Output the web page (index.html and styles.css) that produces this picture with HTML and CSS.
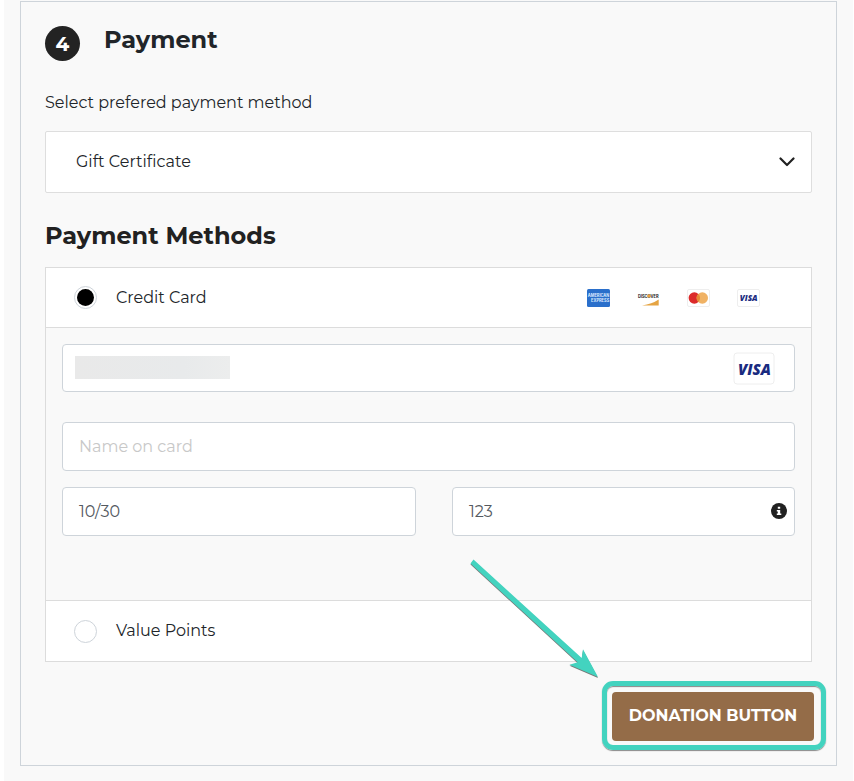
FILE: index.html
```html
<!DOCTYPE html>
<html lang="en">

<head>
    <meta charset="UTF-8">
    <meta name="viewport" content="width=device-width, initial-scale=1.0">
    <title>Payment</title>
    <link rel="stylesheet" href="styles.css">
</head>

<body>
    <main class="page">
        <section class="panel">
            <header class="step-header">
                <span class="step-number">4</span>
                <h2 class="step-title">Payment</h2>
            </header>

            <p class="select-label">Select prefered payment method</p>
            <div class="select-box">
                <span>Gift Certificate</span>
                <svg class="chevron" viewBox="0 0 16 10">
                    <path d="M1.500 1.500L8 8l6.500-6.500" />
                </svg>
            </div>

            <h2 class="methods-title">Payment Methods</h2>
            <div class="methods">
                <!-- Credit card -->
                <div class="method-row">
                    <span class="radio checked"></span>
                    <span>Credit Card</span>
                    <div class="card-icons">
                        <svg class="card-icon" viewBox="0 0 24 18">
                            <rect width="23" height="18" rx="1.500" fill="#2a6fcb" />
                            <text class="amex" x="0.800" y="7.800" textLength="21.500" lengthAdjust="spacingAndGlyphs">AMERICAN</text>
                            <text class="amex" x="4" y="12.800" textLength="18.300" lengthAdjust="spacingAndGlyphs">EXPRESS</text>
                        </svg>
                        <svg class="card-icon" viewBox="0 0 24 18">
                            <text class="discover" x="1" y="8.600" textLength="20.500" lengthAdjust="spacingAndGlyphs">DISCOVER</text>
                            <circle cx="12.200" cy="6.900" r="1.700" fill="#eaa23f" />
                            <path d="M5 16.500Q15 15 21.700 10.500V16.500z" fill="#e5a443" />
                        </svg>
                        <svg class="card-icon" viewBox="0 0 24 18">
                            <rect class="card-edge" x="0.500" y="0.500" width="22" height="17" rx="1.500" />
                            <circle cx="7.300" cy="9" r="5.700" fill="#dc2b2b" />
                            <circle cx="15.300" cy="9" r="5.700" fill="#f0b264" />
                            <path d="M11.300 4.900a5.700 5.700 0 010 8.200a5.700 5.700 0 010-8.200z" fill="#e58a35" />
                        </svg>
                        <svg class="card-icon" viewBox="0 0 24 18">
                            <rect class="card-edge" x="0.500" y="0.500" width="22" height="17" rx="1.500" />
                            <text class="visa" x="2.800" y="12" font-size="8.500" textLength="17.800" lengthAdjust="spacingAndGlyphs">VISA</text>
                        </svg>
                    </div>
                </div>

                <div class="card-form">
                    <div class="field number-field">
                        <span class="masked"></span>
                        <svg class="visa-badge" viewBox="0 0 42 34">
                            <rect class="card-edge" x="1" y="1" width="40" height="31" rx="3" />
                            <text class="visa" x="5" y="22.500" font-size="15.500" textLength="33" lengthAdjust="spacingAndGlyphs">VISA</text>
                        </svg>
                    </div>
                    <div class="field name-field">
                        <span class="placeholder">Name on card</span>
                    </div>
                    <div class="field-row">
                        <div class="field"><span>10/30</span></div>
                        <div class="field">
                            <span>123</span>
                            <svg class="info-icon" viewBox="0 0 16 16">
                                <circle cx="8" cy="8" r="8" fill="#212121" />
                                <path d="M6.800 3.800h2.400v2H6.800zM5.800 7h3.400v3.600h1.100v1.500H5.800v-1.500h1V8.500h-1z" fill="#fff" />
                            </svg>
                        </div>
                    </div>
                </div>

                <!-- Value points -->
                <div class="method-row">
                    <span class="radio"></span>
                    <span>Value Points</span>
                </div>
            </div>

            <div class="actions">
                <div class="highlight">
                    <button class="donate-btn">DONATION BUTTON</button>
                    <svg class="arrow" viewBox="0 0 130 122">
                        <path d="M3.500 1.500L111.700 99.900 113 91.300 128 119 99.500 106.800 107.700 104.200.500 5.500z" />
                    </svg>
                </div>
            </div>
        </section>
    </main>
</body>

</html>
```
FILE: styles.css
```css
* {
    box-sizing: border-box;
}

body {
    margin: 0;
    background: #fff;
    color: #212529;
    font-family: 'Montserrat', 'Inter', sans-serif;
    font-size: 16px;
    font-weight: 400;
    line-height: 24px;
}

.page {
    height: 781px;
    margin: 0 1px 0 4px;
    padding: 1px 16px 0;
    background: #f9f9f9;
}

.panel {
    width: 817px;
    height: 765px;
    padding: 24px;
    border: 1px solid #ced4da;
}

.step-header {
    display: flex;
    height: 35px;
}

.step-number {
    display: flex;
    justify-content: center;
    align-items: center;
    width: 35px;
    height: 35px;
    margin-right: 24px;
    border-radius: 50%;
    background: #232323;
    color: #fff;
    font-size: 20px;
    font-weight: 700;
}

h2 {
    margin: 0;
    font-size: 24px;
    font-weight: 700;
    line-height: 28px;
}

.select-label {
    margin: 30px 0 16px;
}

.select-box {
    display: flex;
    justify-content: space-between;
    align-items: center;
    height: 62px;
    padding: 0 16px 0 30px;
    border: 1px solid #dedede;
    border-radius: 2px;
    background: #fff;
}

.chevron {
    width: 16px;
    height: 10px;
    fill: none;
    stroke: #212121;
    stroke-width: 2.2;
    stroke-linecap: round;
    stroke-linejoin: round;
}

.methods-title {
    margin: 29px 0 17px;
    color: #212121;
}

.methods {
    border: 1px solid #dcdcdc;
}

.method-row {
    display: flex;
    align-items: center;
    height: 59px;
    padding-left: 28px;
    background: #fff;
}

.method-row:last-child {
    height: 60px;
}

.radio {
    width: 23px;
    height: 23px;
    margin-right: 19px;
    border: 1px solid #ced4da;
    border-radius: 50%;
    background: #fff;
}

.radio.checked {
    padding: 2px;
    background: #000;
    background-clip: content-box;
}

.card-icons {
    display: flex;
    gap: 26px;
    margin: 1px 50px 0 auto;
}

.card-icon {
    width: 24px;
    height: 18px;
}

.card-edge {
    fill: #fff;
    stroke: #eee;
}

.amex {
    fill: #dceaff;
    font: 700 4.5px 'Inter', sans-serif;
}

.discover {
    fill: #222;
    font: 700 4.5px 'Inter', sans-serif;
}

.visa {
    fill: #1a2b80;
    font-family: 'Open Sans', sans-serif;
    font-style: italic;
    font-weight: 800;
}

.card-form {
    height: 274px;
    padding: 16px;
    border-top: 1px solid #dcdcdc;
    border-bottom: 1px solid #dcdcdc;
}

.field {
    display: flex;
    align-items: center;
    justify-content: space-between;
    height: 49px;
    padding: 0 7.5px 0 16px;
    border: 1px solid #ced4da;
    border-radius: 4px;
    background: #fff;
    color: #54595f;
}

.number-field {
    height: 48px;
    padding: 0 19px 0 12px;
}

.masked {
    width: 155px;
    height: 23px;
    margin-bottom: 2px;
    background: linear-gradient(90deg, #e9e9e9, #e8eaeb 70%, #eceded);
}

.visa-badge {
    width: 42px;
    height: 34px;
    margin-top: 2px;
}

.name-field {
    margin: 30px 0 16px;
}

.placeholder {
    color: #c8c8c8;
}

.field-row {
    display: grid;
    grid-template-columns: 354px 343px;
    gap: 36px;
}

.info-icon {
    width: 16px;
    height: 16px;
    margin-bottom: 1px;
}

.actions {
    display: flex;
    justify-content: flex-end;
    margin: 19px -14px 0 0;
}

.highlight {
    position: relative;
    padding: 6px 7px 4px 5px;
    border: 5px solid #43d3bf;
    border-radius: 11px;
    box-shadow: 0 1px 1px #888, inset 0 1px 1px #888;
}

.donate-btn {
    display: block;
    width: 202px;
    height: 49px;
    padding: 0 0 2px;
    border: 0;
    border-radius: 4px;
    background: #946c48;
    color: #fff;
    font: 700 16px 'Montserrat', 'Inter', sans-serif;
}

/* Arrow pointing at the highlighted button */
.arrow {
    position: absolute;
    top: -128.5px;
    left: -137.5px;
    width: 130px;
    height: 122px;
    fill: #43d3bf;
    filter: drop-shadow(0 1px 0.5px #777);
}
```
